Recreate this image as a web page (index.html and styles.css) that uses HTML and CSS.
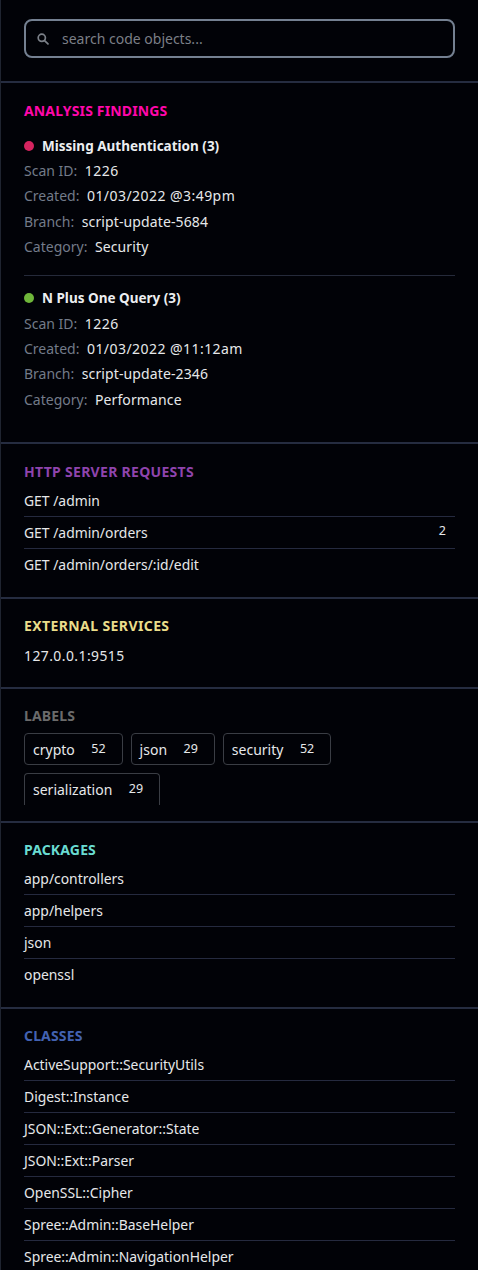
FILE: index.html
```html
<!DOCTYPE html>
<html lang="en">
<head>
<meta charset="utf-8">
<title>Code objects</title>
<link rel="stylesheet" href="styles.css">
</head>
<body>
<aside class="panel">
  <div class="search-wrap">
    <div class="search">
      <svg class="search-icon" viewBox="0 0 14 14" width="12" height="12" aria-hidden="true"><circle cx="5.6" cy="5.6" r="4.2" fill="none" stroke="currentColor" stroke-width="2"/><path d="M8.8 8.8 L12.8 12.8" stroke="currentColor" stroke-width="2" stroke-linecap="round"/></svg>
      <span class="placeholder">search code objects...</span>
    </div>
  </div>

  <section class="section findings-section">
    <h2 class="title pink">ANALYSIS FINDINGS</h2>
    <div class="finding">
      <div class="finding-name"><span class="dot red"></span>Missing Authentication (3)</div>
      <div class="meta"><span class="key">Scan ID:</span><span class="num">1226</span></div>
      <div class="meta"><span class="key">Created:</span><span class="num">01/03/2022 @3:49pm</span></div>
      <div class="meta"><span class="key">Branch:</span><span>script-update-5684</span></div>
      <div class="meta"><span class="key">Category:</span><span>Security</span></div>
    </div>
    <div class="finding second">
      <div class="finding-name"><span class="dot green"></span>N Plus One Query (3)</div>
      <div class="meta"><span class="key">Scan ID:</span><span class="num">1226</span></div>
      <div class="meta"><span class="key">Created:</span><span class="num">01/03/2022 @11:12am</span></div>
      <div class="meta"><span class="key">Branch:</span><span>script-update-2346</span></div>
      <div class="meta"><span class="key">Category:</span><span>Performance</span></div>
    </div>
  </section>

  <section class="section http-section">
    <h2 class="title purple">HTTP SERVER REQUESTS</h2>
    <ul class="list">
      <li>GET /admin</li>
      <li>GET /admin/orders<span class="count">2</span></li>
      <li>GET /admin/orders/:id/edit</li>
    </ul>
  </section>

  <section class="section external-section">
    <h2 class="title yellow">EXTERNAL SERVICES</h2>
    <ul class="list">
      <li class="num">127.0.0.1:9515</li>
    </ul>
  </section>

  <section class="section labels-section">
    <h2 class="title gray">LABELS</h2>
    <div class="labels">
      <div class="label">crypto<span class="label-count">52</span></div>
      <div class="label">json<span class="label-count">29</span></div>
      <div class="label">security<span class="label-count">52</span></div>
      <div class="label clipped">serialization<span class="label-count">29</span></div>
    </div>
  </section>

  <section class="section packages-section">
    <h2 class="title teal">PACKAGES</h2>
    <ul class="list">
      <li>app/controllers</li>
      <li>app/helpers</li>
      <li>json</li>
      <li>openssl</li>
    </ul>
  </section>

  <section class="section classes-section">
    <h2 class="title blue">CLASSES</h2>
    <ul class="list">
      <li>ActiveSupport::SecurityUtils</li>
      <li>Digest::Instance</li>
      <li>JSON::Ext::Generator::State</li>
      <li>JSON::Ext::Parser</li>
      <li>OpenSSL::Cipher</li>
      <li>Spree::Admin::BaseHelper</li>
      <li>Spree::Admin::NavigationHelper</li>
    </ul>
  </section>
</aside>
</body>
</html>
```
FILE: styles.css
```css
* { box-sizing: border-box; }
html, body { margin: 0; padding: 0; height: 100%; background: #010207; }
body { overflow: hidden; font-family: "Noto Sans", "Liberation Sans", sans-serif; font-size: 14px; color: #e6e8ea; }
.panel { height: 1270px; overflow: hidden; border-left: 1px solid #1f2430; background: #010207; }

.search-wrap { padding: 19px 23px 23px 23px; }
.search { height: 39px; border: 2px solid #748091; border-radius: 8px; display: flex; align-items: center; padding-left: 11px; color: #7b7f86; }
.search-icon { flex: none; color: #7b8088; }
.placeholder { margin-left: 13px; font-size: 14px; }

.section { border-top: 2px solid #252c40; padding: 18px 23px 0 23px; }
.title { margin: 0; font-size: 14px; line-height: 20px; font-weight: 700; letter-spacing: 0.15px; }
.pink { color: #ff07aa; }
.purple { color: #8f44ad; letter-spacing: 0.3px; }
.yellow { color: #eadd8a; letter-spacing: 0.4px; }
.gray { color: #6b6b6b; }
.teal { color: #69dcd2; }
.blue { color: #4362b1; }

.findings-section { height: 361px; }
.http-section { height: 155px; }
.external-section { height: 90px; padding-top: 17px; }
.labels-section { height: 134px; padding-top: 17px; }
.packages-section { height: 186px; padding-top: 17px; }
.classes-section { padding-top: 17px; }

.finding { margin-top: 12px; }
.finding.second { margin-top: 15px; padding-top: 10px; border-top: 1px solid #252a3a; }
.finding-name { display: flex; align-items: center; font-size: 13.5px; font-weight: 700; line-height: 24px; height: 25px; color: #eceef0; }
.dot { width: 10px; height: 10px; border-radius: 50%; margin-right: 8px; }
.red { background: #d5245f; }
.green { background: #6fb63a; }
.meta { display: flex; line-height: 25.4px; height: 25.4px; letter-spacing: 0.12px; }
.key { color: #737b89; margin-right: 7.5px; letter-spacing: 0; }
.num { letter-spacing: 0.45px; }

.list { list-style: none; margin: 3px 0 0; padding: 0; font-size: 13.9px; }
.external-section .list { margin-top: 4px; }
.list li { position: relative; height: 32px; line-height: 32px; border-bottom: 1px solid #252a3f; }
.list li:last-child { border-bottom: 0; }
.count { position: absolute; right: 9px; top: -2px; font-size: 12.5px; }

.labels { display: flex; flex-wrap: wrap; gap: 8px; margin-top: 7px; }
.label { height: 32px; line-height: 31px; padding: 0 8px; border: 1px solid #3a3d44; border-radius: 4px; display: flex; }
.clipped { border-bottom: 0; border-radius: 4px 4px 0 0; }
.label-count { margin-left: 16.5px; margin-right: 8px; font-size: 12.5px; line-height: 29px; }
```
